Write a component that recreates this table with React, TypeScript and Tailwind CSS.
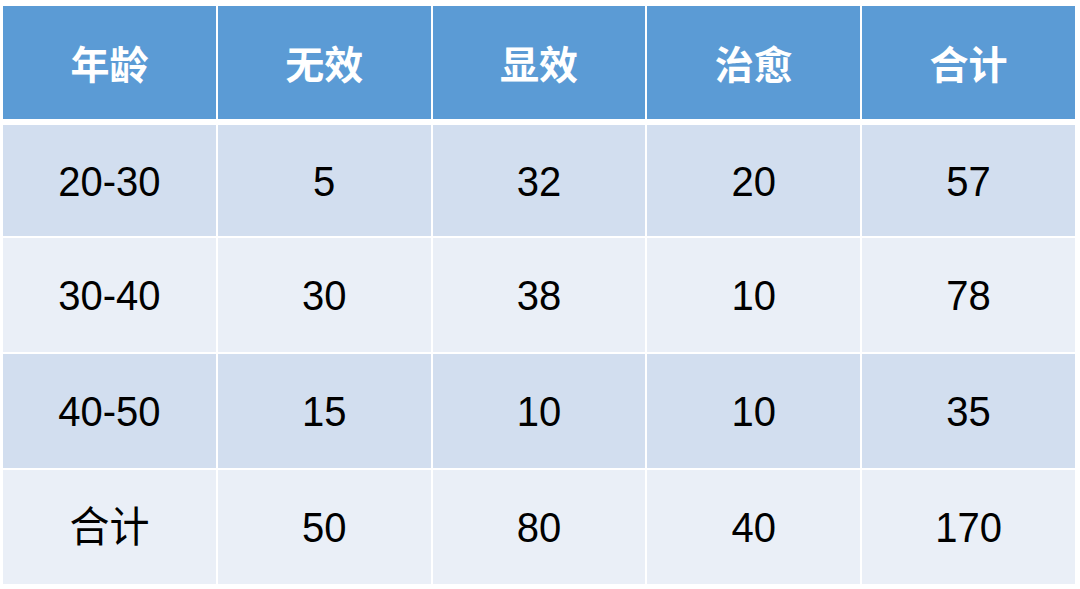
const headers = ["年龄", "无效", "显效", "治愈", "合计"];

const rows = [
  { cells: ["20-30", "5", "32", "20", "57"], h: "h-[111px]", bg: "bg-[#d2deef]" },
  { cells: ["30-40", "30", "38", "10", "78"], h: "h-[114px]", bg: "bg-[#eaeff7]" },
  { cells: ["40-50", "15", "10", "10", "35"], h: "h-[114px]", bg: "bg-[#d2deef]" },
  { cells: ["合计", "50", "80", "40", "170"], h: "h-[114px]", bg: "bg-[#eaeff7]" },
];

export default function App() {
  return (
    <div className="w-[1080px] h-[589px] bg-white pt-[6px] pl-[3px] font-['Liberation_Sans','Noto_Sans_CJK_SC',sans-serif]">
      <div className="w-[1072px] flex flex-col">
        {/* Header */}
        <div className="grid grid-cols-5 gap-x-[2px] h-[113px] mb-[6px]">
          {headers.map((h) => (
            <div
              key={h}
              className="bg-[#5b9bd5] flex items-center justify-center text-white text-[39px] font-bold font-['Noto_Sans_CJK_SC',sans-serif]"
            >
              {h}
            </div>
          ))}
        </div>

        {/* Body */}
        <div className="flex flex-col gap-y-[2px]">
          {rows.map((r, i) => (
            <div key={i} className={`grid grid-cols-5 gap-x-[2px] ${r.h}`}>
              {r.cells.map((c, j) => (
                <div
                  key={j}
                  className={`${r.bg} flex items-center justify-center text-black text-[40px] leading-none`}
                >
                  <span className="inline-block scale-y-[1.05]">{c}</span>
                </div>
              ))}
            </div>
          ))}
        </div>
      </div>
    </div>
  );
}
